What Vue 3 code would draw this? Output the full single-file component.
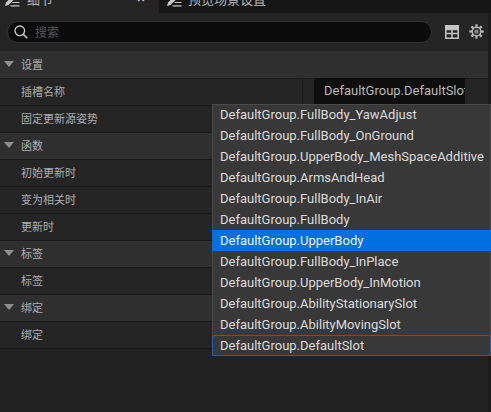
<template>
  <div class="panel">
    <div class="tabbar">
      <div class="tab active">
        <svg class="tab-icon" viewBox="0 0 16 14"><path d="M1 13 L2 9.500 L8 3.500 L10.500 6 L4.500 12 Z M9 2.500 L10.500 1 L13 3.500 L11.500 5 Z" fill="#c8c8c8"/><path d="M8.500 9.500h7M6.500 12.800h9" stroke="#c8c8c8" stroke-width="1.200"/></svg>
        <span class="tab-title">细节</span>
        <span class="tab-close">×</span>
      </div>
      <div class="tab">
        <svg class="tab-icon" viewBox="0 0 16 14"><path d="M1 13 L2 9.500 L8 3.500 L10.500 6 L4.500 12 Z M9 2.500 L10.500 1 L13 3.500 L11.500 5 Z" fill="#c8c8c8"/><path d="M8.500 9.500h7M6.500 12.800h9" stroke="#c8c8c8" stroke-width="1.200"/></svg>
        <span class="tab-title">预览场景设置</span>
      </div>
    </div>

    <div class="body">
      <div class="searchrow">
        <div class="search">
          <svg class="search-icon" viewBox="0 0 14 14"><circle cx="5.800" cy="5.800" r="4.800" fill="none" stroke="#d0d0d0" stroke-width="1.300"/><path d="M9.300 9.300 L13.300 13.300" stroke="#d0d0d0" stroke-width="1.500"/></svg>
          <span>搜索</span>
        </div>
        <svg class="tool table" viewBox="0 0 14 14"><path fill="#c4c4c4" fill-rule="evenodd" d="M0 0h14v14H0z M1.500 5.200v2.600h4.700V5.200z M7.800 5.200v2.600h4.700V5.200z M1.500 9.300v3.200h4.700V9.300z M7.800 9.300v3.200h4.700V9.300z"/></svg>
        <svg class="tool gear" viewBox="0 0 16 16">
          <g fill="#b4b4b4">
            <rect x="6.800" y="0.300" width="2.400" height="15.400"/>
            <rect x="6.800" y="0.300" width="2.400" height="15.400" transform="rotate(45 8 8)"/>
            <rect x="6.800" y="0.300" width="2.400" height="15.400" transform="rotate(90 8 8)"/>
            <rect x="6.800" y="0.300" width="2.400" height="15.400" transform="rotate(135 8 8)"/>
          </g>
          <circle cx="8" cy="8" r="4.600" fill="#3a3a3a" stroke="#b4b4b4" stroke-width="1.400"/>
          <circle cx="8" cy="8" r="2" fill="#8a8a8a"/>
        </svg>
      </div>

      <template v-for="group in groups" :key="group.title">
        <div class="group-head">
          <span class="caret"></span>
          <span class="group-title">{{ group.title }}</span>
        </div>
        <div v-for="row in group.rows" :key="row" class="row">
          <span>{{ row }}</span>
          <div v-if="row === '插槽名称'" class="value">
            <span class="value-box">DefaultGroup.DefaultSlot</span>
          </div>
        </div>
      </template>
    </div>

    <ul class="dropdown">
      <li
        v-for="opt in options"
        :key="opt"
        :class="{ selected: opt === 'DefaultGroup.UpperBody', current: opt === 'DefaultGroup.DefaultSlot' }"
      >{{ opt }}</li>
    </ul>
  </div>
</template>

<script setup>
const groups = [
  { title: '设置', rows: ['插槽名称', '固定更新源姿势'] },
  { title: '函数', rows: ['初始更新时', '变为相关时', '更新时'] },
  { title: '标签', rows: ['标签'] },
  { title: '绑定', rows: ['绑定'] },
]

const options = [
  'DefaultGroup.FullBody_YawAdjust',
  'DefaultGroup.FullBody_OnGround',
  'DefaultGroup.UpperBody_MeshSpaceAdditive',
  'DefaultGroup.ArmsAndHead',
  'DefaultGroup.FullBody_InAir',
  'DefaultGroup.FullBody',
  'DefaultGroup.UpperBody',
  'DefaultGroup.FullBody_InPlace',
  'DefaultGroup.UpperBody_InMotion',
  'DefaultGroup.AbilityStationarySlot',
  'DefaultGroup.AbilityMovingSlot',
  'DefaultGroup.DefaultSlot',
]
</script>

<style>
body {
  background: #1c1c1c;
}
</style>

<style scoped>
.panel {
  position: relative;
  width: 491px;
  height: 412px;
  overflow: hidden;
  background: #1c1c1c;
  font-family: "Roboto", "Noto Sans CJK SC", sans-serif;
  font-size: 11px;
  color: #adadad;
}

/* 顶部标签页，内容被窗口上沿裁掉一半 */
.tabbar {
  display: flex;
  height: 13px;
  background: #161616;
  overflow: hidden;
}

.tab {
  display: flex;
  align-items: flex-start;
  flex: 1;
  height: 13px;
  padding-left: 7px;
  color: #b8b8b8;
}

.tab.active {
  flex: 0 0 159px;
  padding-left: 4px;
  box-sizing: border-box;
  background: #242424;
}

.tab-icon {
  flex: none;
  width: 16px;
  height: 14px;
  margin-top: -7px;
}

.tab-title {
  margin: -9px 0 0 7px;
  font-size: 13px;
  line-height: 17px;
  white-space: nowrap;
}

.tab:not(.active) .tab-title {
  margin-left: 6px;
}

.tab-close {
  margin: -9px 0 0 auto;
  padding-right: 14px;
  font-size: 15px;
  line-height: 15px;
  color: #d0d0d0;
}

.body {
  width: 488px;
  height: 399px;
  background: #222222;
}

.searchrow {
  display: flex;
  align-items: center;
  height: 39px;
  box-sizing: border-box;
  padding: 0 0 1px 7px;
  background: #242424;
  border-bottom: 1px solid #2f2f2f;
}

.search {
  display: flex;
  flex: none;
  align-items: center;
  gap: 7px;
  width: 425px;
  height: 22px;
  box-sizing: border-box;
  padding-left: 6px;
  background: #0b0b0b;
  border: 1px solid #2f2f2f;
  border-radius: 11px;
  color: #555555;
  font-size: 12px;
}

.search-icon {
  width: 14px;
  height: 14px;
}

.tool {
  flex: none;
  width: 14px;
  height: 14px;
}

.table {
  margin-left: 13px;
}

.gear {
  width: 15px;
  height: 15px;
  margin-left: 10px;
}

.group-head {
  display: flex;
  align-items: center;
  height: 27px;
  box-sizing: border-box;
  padding: 0 0 2px 4px;
  background: #2f2f2f;
  border-bottom: 1px solid #1a1a1a;
  color: #adadad;
}

.group-title {
  margin-left: 7px;
}

.caret {
  width: 0;
  height: 0;
  border-left: 5.500px solid transparent;
  border-right: 5.500px solid transparent;
  border-top: 6px solid #8e8e8e;
}

.row {
  position: relative;
  display: flex;
  align-items: center;
  height: 27px;
  box-sizing: border-box;
  padding: 0 0 2px 21px;
  background: #242424;
  border-bottom: 1px solid #1a1a1a;
}

.value {
  position: absolute;
  left: 302px;
  top: -1px;
  bottom: 0;
  padding-left: 11px;
  border-left: 1px solid #1a1a1a;
}

.value-box {
  display: block;
  width: 151px;
  height: 27px;
  box-sizing: border-box;
  padding-left: 10px;
  overflow: hidden;
  background: #0e0e0e;
  border-radius: 4px 0 0 0;
  color: #b8b8b8;
  font-size: 13px;
  line-height: 26px;
  white-space: nowrap;
}

.dropdown {
  position: absolute;
  left: 212px;
  top: 104px;
  width: 279px;
  box-sizing: border-box;
  margin: 0;
  padding: 0;
  list-style: none;
  background: #383838;
  border: 1px solid #4a4a4a;
  color: #dcdcdc;
  font-size: 13px;
}

.dropdown li {
  height: 21px;
  padding-left: 7px;
  line-height: 21px;
  white-space: nowrap;
}

.dropdown li:first-child {
  height: 20px;
  line-height: 20px;
}

.dropdown li.selected {
  margin: 0 -1px;
  padding-left: 8px;
  background: #0070e0;
  color: #f4f4f4;
}

.dropdown li.current {
  height: 21px;
  margin: 0 -1px -1px;
  padding-left: 7px;
  border: 1px solid #1b63b8;
  border-radius: 3px;
  box-sizing: border-box;
  line-height: 19px;
}
</style>
